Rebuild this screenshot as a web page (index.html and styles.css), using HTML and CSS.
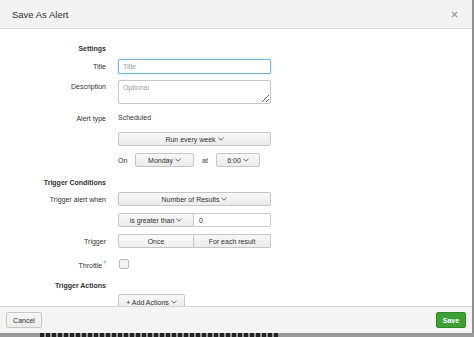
FILE: index.html
```html
<!DOCTYPE html>
<html lang="en">
<head>
    <meta charset="UTF-8">
    <title>Save As Alert</title>
    <link rel="stylesheet" href="styles.css">
</head>
<body>
    <div class="screen">
        <div class="screen-main">
            <div class="modal">
                <div class="modal-header">
                    <h1>Save As Alert</h1>
                    <svg class="close" width="7" height="7" viewBox="0 0 7 7"><path d="M1 1L6 6M6 1L1 6" stroke="#9a9a9a" stroke-width="1.1"/></svg>
                </div>

                <div class="modal-body">
                    <div class="row heading r-settings"><div class="label">Settings</div></div>

                    <div class="row r-title">
                        <div class="label">Title</div>
                        <div class="control"><input type="text" class="field focused" placeholder="Title"></div>
                    </div>

                    <div class="row r-desc">
                        <div class="label label-top">Description</div>
                        <div class="control"><textarea class="field area" placeholder="Optional"></textarea></div>
                    </div>

                    <div class="row r-type">
                        <div class="label">Alert type</div>
                        <div class="control text">Scheduled</div>
                    </div>

                    <div class="row r-run">
                        <div class="label"></div>
                        <div class="control"><button class="btn wide">Run every week <svg class="caret" width="6" height="4" viewBox="0 0 6 4"><path d="M0.5 0.8L3 3.2L5.5 0.8" fill="none" stroke="#555" stroke-width="0.9"/></svg></button></div>
                    </div>

                    <div class="row r-on">
                        <div class="label"></div>
                        <div class="control on">
                            <span class="word">On</span>
                            <button class="btn day">Monday <svg class="caret" width="6" height="4" viewBox="0 0 6 4"><path d="M0.5 0.8L3 3.2L5.5 0.8" fill="none" stroke="#555" stroke-width="0.9"/></svg></button>
                            <span class="word at">at</span>
                            <button class="btn time">6:00 <svg class="caret" width="6" height="4" viewBox="0 0 6 4"><path d="M0.5 0.8L3 3.2L5.5 0.8" fill="none" stroke="#555" stroke-width="0.9"/></svg></button>
                        </div>
                    </div>

                    <div class="row heading r-cond"><div class="label">Trigger Conditions</div></div>

                    <div class="row r-when">
                        <div class="label">Trigger alert when</div>
                        <div class="control"><button class="btn wide">Number of Results <svg class="caret" width="6" height="4" viewBox="0 0 6 4"><path d="M0.5 0.8L3 3.2L5.5 0.8" fill="none" stroke="#555" stroke-width="0.9"/></svg></button></div>
                    </div>

                    <div class="row r-cmp">
                        <div class="label"></div>
                        <div class="control joined">
                            <button class="btn half">is greater than <svg class="caret" width="6" height="4" viewBox="0 0 6 4"><path d="M0.5 0.8L3 3.2L5.5 0.8" fill="none" stroke="#555" stroke-width="0.9"/></svg></button>
                            <input type="text" class="field num" value="0">
                        </div>
                    </div>

                    <div class="row r-trig">
                        <div class="label">Trigger</div>
                        <div class="control joined">
                            <button class="btn half seg-left">Once</button>
                            <button class="btn half seg-right">For each result</button>
                        </div>
                    </div>

                    <div class="row r-throttle">
                        <div class="label">Throttle<sup>?</sup></div>
                        <div class="control"><span class="check"></span></div>
                    </div>

                    <div class="row heading r-actions"><div class="label">Trigger Actions</div></div>

                    <div class="row r-add">
                        <div class="label"></div>
                        <div class="control"><button class="btn add">+ Add Actions <svg class="caret" width="6" height="4" viewBox="0 0 6 4"><path d="M0.5 0.8L3 3.2L5.5 0.8" fill="none" stroke="#555" stroke-width="0.9"/></svg></button></div>
                    </div>
                </div>

                <div class="modal-footer">
                    <button class="btn cancel">Cancel</button>
                    <button class="btn save">Save</button>
                </div>
            </div>
            <div class="edge"></div>
        </div>
        <div class="backdrop"></div>
    </div>
</body>
</html>
```

FILE: styles.css
```css
html, body {
    margin: 0;
    padding: 0;
}
body {
    width: 474px;
    height: 337px;
    overflow: hidden;
    font-family: "Liberation Sans", Arial, sans-serif;
    font-size: 7px;
    color: #333;
    background: #fff;
}
.screen {
    display: flex;
    flex-direction: column;
    height: 337px;
}
.screen-main {
    display: flex;
    height: 333px;
}
.edge {
    width: 2px;
    background: #8f8f8f;
}
.modal {
    width: 472px;
    display: flex;
    flex-direction: column;
    background: #fff;
}
.modal-header {
    height: 28px;
    border-bottom: 1px solid #dcdcdc;
    background: #f3f3f3;
    display: flex;
    align-items: center;
    justify-content: space-between;
    padding: 0 14px 0 12px;
}
.modal-header h1 {
    margin: 0;
    font-size: 9.5px;
    font-weight: normal;
    color: #333;
}
.modal-body {
    flex: 1;
    overflow: hidden;
}
.row {
    display: grid;
    grid-template-columns: 106px 153px;
    column-gap: 12px;
    align-items: center;
}
.label {
    text-align: right;
    color: #333;
    white-space: nowrap;
}
.label-top {
    align-self: start;
    padding-top: 3px;
}
.heading .label {
    font-weight: bold;
}
.control.text {
    line-height: 14px;
}

/* row positions */
.r-settings { margin-top: 14px; height: 10px; }
.r-title { margin-top: 6px; height: 15px; }
.r-desc { margin-top: 6px; height: 24px; }
.r-type { margin-top: 7px; height: 14px; }
.r-run { margin-top: 7px; height: 14px; }
.r-on { margin-top: 7px; height: 14px; }
.r-cond { margin-top: 10px; height: 10px; }
.r-when { margin-top: 5px; height: 14px; }
.r-cmp { margin-top: 7px; height: 14px; }
.r-trig { margin-top: 7px; height: 14px; }
.r-throttle { margin-top: 9px; height: 14px; }
.r-actions { margin-top: 9px; height: 10px; }
.r-add { margin-top: 4px; height: 14px; align-items: start; }

.field {
    box-sizing: border-box;
    width: 153px;
    border: 1px solid #c8c8c8;
    border-radius: 2px;
    font-family: "Liberation Sans", Arial, sans-serif;
    font-size: 7px;
    color: #333;
    padding: 0 4px;
    margin: 0;
    background: #fff;
    outline: none;
    display: block;
}
.field::placeholder {
    color: #a0a0a0;
}
.field.focused {
    height: 15px;
    border-color: #7bb4dc;
    box-shadow: 0 0 2px rgba(90, 160, 210, 0.5);
}
.field.area {
    height: 24px;
    padding-top: 3px;
    resize: vertical;
}
.btn {
    box-sizing: border-box;
    height: 14px;
    padding: 0 4px;
    margin: 0;
    border: 1px solid #c6c6c6;
    border-radius: 2px;
    background: linear-gradient(#f8f8f8, #ebebeb);
    font-family: "Liberation Sans", Arial, sans-serif;
    font-size: 7px;
    color: #333;
    display: inline-flex;
    align-items: center;
    justify-content: center;
    gap: 2px;
}
.caret {
    display: block;
}
.btn.wide {
    width: 153px;
}
.on {
    display: flex;
    align-items: center;
}
.word {
    width: 17px;
}
.word.at {
    width: 14px;
    margin-left: 8px;
}
.btn.day {
    width: 59px;
}
.btn.time {
    width: 44px;
}
.joined {
    display: flex;
}
.btn.half {
    width: 76px;
    border-radius: 2px 0 0 2px;
}
.btn.seg-right {
    width: 77px;
    border-left: none;
    border-radius: 0 2px 2px 0;
}
.btn.seg-left {
    background: linear-gradient(#fbfbfb, #f0f0f0);
}
.field.num {
    width: 77px;
    height: 14px;
    border-left: none;
    border-radius: 0 2px 2px 0;
    padding-left: 5px;
}
sup {
    color: #3d8fc9;
    font-size: 5px;
    vertical-align: 3px;
    margin-left: 1px;
}
.check {
    display: block;
    box-sizing: border-box;
    width: 10px;
    height: 10px;
    margin-left: 1px;
    border: 1px solid #bdbdbd;
    border-radius: 2px;
    background: #f4f4f4;
}
.btn.add {
    width: 67px;
    height: 16px;
}
.modal-footer {
    height: 26px;
    border-top: 1px solid #d8d8d8;
    background: #f5f5f5;
    display: flex;
    justify-content: space-between;
    align-items: center;
    padding: 0 6px;
}
.btn.cancel {
    width: 36px;
    height: 16px;
}
.btn.save {
    width: 30px;
    height: 16px;
    border-color: #2e8a28;
    background: #3d9f35;
    color: #fff;
    font-weight: bold;
}
.backdrop {
    height: 4px;
    background:
        repeating-linear-gradient(90deg, #222 0 4px, #9a9a9a 4px 6px) 40px 0 / 240px 4px no-repeat,
        #9a9a9a;
}
```
